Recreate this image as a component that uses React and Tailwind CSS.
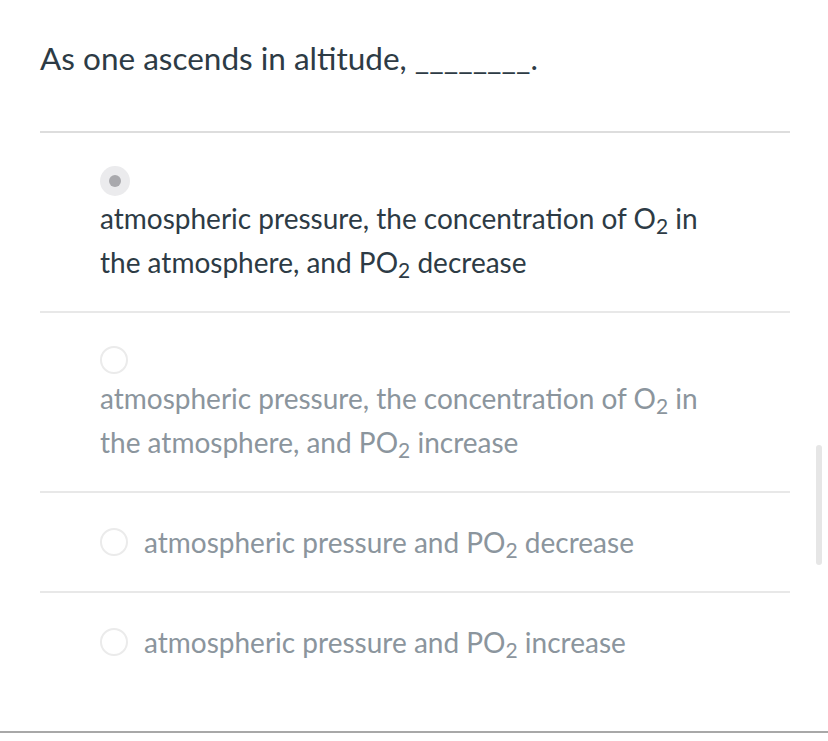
import React from 'react';

const font = { fontFamily: 'Lato, "Open Sans", sans-serif' };

function Radio({ selected }) {
  if (selected) {
    return (
      <span className="flex h-[30px] w-[30px] shrink-0 items-center justify-center rounded-full bg-[#ebebed]">
        <span className="h-3 w-3 rounded-full bg-[#a9a9ad]" />
      </span>
    );
  }
  return <span className="block h-[28px] w-[28px] shrink-0 rounded-full border-2 border-[#ebebeb] bg-white" />;
}

const O2 = () => (
  <>
    O<sub className="text-[0.75em]">2</sub>
  </>
);

function StackedOption({ selected, children }) {
  return (
    <div className="border-b-2 border-[#e8e8e8] pb-[27px] pl-[60px] pt-[33px]">
      <Radio selected={selected} />
      <p
        className={`w-[620px] text-[28px] leading-[44px] ${
          selected ? 'text-[#2d3b45]' : 'mt-[2px] text-[#8b959d]'
        }`}
      >
        {children}
      </p>
    </div>
  );
}

function InlineOption({ children, last }) {
  return (
    <div className={`flex items-center gap-[16px] pb-[32px] pl-[60px] pt-[32px] ${last ? '' : 'border-b-2 border-[#e8e8e8]'}`}>
      <Radio />
      <p className="text-[28px] leading-[34px] text-[#8b959d]">{children}</p>
    </div>
  );
}

export default function App() {
  return (
    <div className="relative h-[741px] w-[828px] overflow-hidden bg-white" style={font}>
      <div className="w-[790px] pl-10">
        <h1 className="border-b-2 border-[#dddddd] pb-[47px] pt-[32px] text-[31.5px] leading-[52px] text-[#2d3b45]">
          As one ascends in altitude, ________.
        </h1>
        <StackedOption selected>
          atmospheric pressure, the concentration of <O2 /> in the atmosphere, and P<O2 /> decrease
        </StackedOption>
        <StackedOption>
          atmospheric pressure, the concentration of <O2 /> in the atmosphere, and P<O2 /> increase
        </StackedOption>
        <InlineOption>
          atmospheric pressure and P<O2 /> decrease
        </InlineOption>
        <InlineOption last>
          atmospheric pressure and P<O2 /> increase
        </InlineOption>
      </div>
      <div className="absolute right-[6px] top-[445px] h-[120px] w-[6px] rounded-full bg-[#e6e6e6]" />
      <div className="absolute bottom-[8px] left-0 h-[2px] w-full bg-[#a8a8a8]" />
    </div>
  );
}
